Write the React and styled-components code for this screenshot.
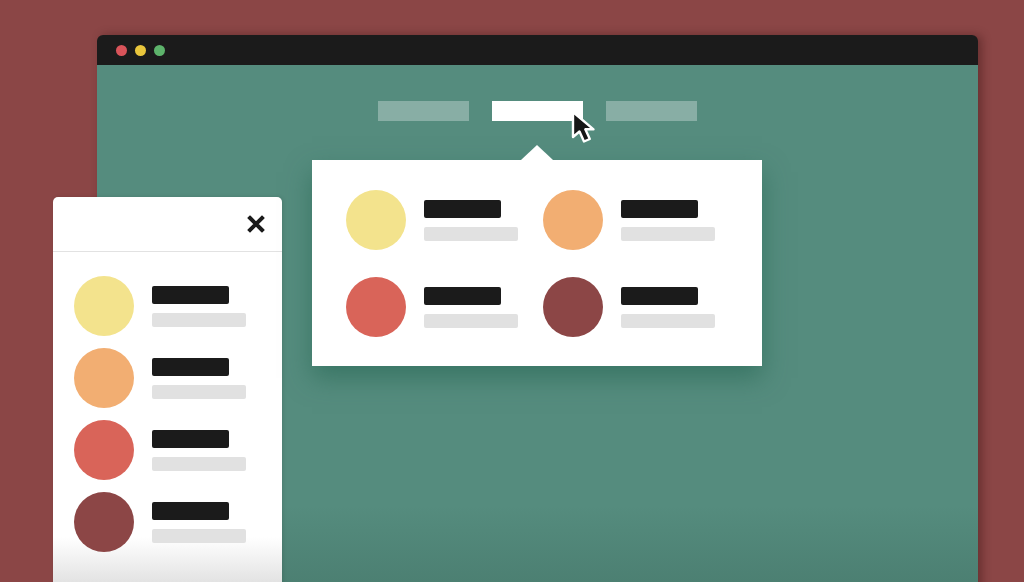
import React from "react";
import styled, { createGlobalStyle } from "styled-components";

const GlobalStyle = createGlobalStyle`
  html, body {
    margin: 0;
    padding: 0;
    background: #8b4646;
    font-family: "Liberation Sans", Arial, sans-serif;
  }
`;

const Stage = styled.div`
  position: relative;
  width: 1024px;
  height: 582px;
  overflow: hidden;
  background: #8b4646;
  padding: 35px 0 0 97px;
  box-sizing: border-box;
`;

const Browser = styled.div`
  width: 881px;
  height: 600px;
  border-radius: 6px 6px 0 0;
  overflow: hidden;
  display: flex;
  flex-direction: column;
  box-shadow: 4px 0 10px rgba(40, 10, 10, 0.35);
`;

const TitleBar = styled.div`
  height: 30px;
  flex: none;
  background: #1b1b1b;
  display: flex;
  align-items: center;
  gap: 8px;
  padding-left: 19px;
`;

const Dot = styled.span`
  width: 11px;
  height: 11px;
  border-radius: 50%;
  background: ${(p) => p.$color};
`;

const Body = styled.div`
  position: relative;
  flex: 1;
  background: #558c7e;
  display: flex;
  flex-direction: column;
  align-items: center;

  &::after {
    content: "";
    position: absolute;
    left: 0;
    right: 0;
    top: 440px;
    height: 90px;
    background: linear-gradient(rgba(0, 0, 0, 0), rgba(20, 50, 40, 0.16));
    pointer-events: none;
  }
`;

const Nav = styled.div`
  display: flex;
  gap: 23px;
  padding-top: 36px;
`;

const NavTab = styled.div`
  position: relative;
  width: 91px;
  height: 20px;
  background: ${(p) => (p.$active ? "#ffffff" : "rgba(255, 255, 255, 0.3)")};
`;

const Cursor = styled.svg`
  position: absolute;
  left: 78px;
  top: 8px;
  width: 28px;
  height: 36px;
  z-index: 3;
`;

const Dropdown = styled.div`
  position: absolute;
  left: 215px;
  top: 95px;
  width: 450px;
  box-sizing: border-box;
  padding: 30px 47px 29px 34px;
  background: #ffffff;
  display: grid;
  grid-template-columns: 172px 172px;
  column-gap: 25px;
  row-gap: 27px;
  z-index: 2;
  box-shadow: 0 12px 24px rgba(30, 95, 75, 0.5);

  &::before {
    content: "";
    position: absolute;
    top: -15px;
    left: 209px;
    border-left: 16px solid transparent;
    border-right: 16px solid transparent;
    border-bottom: 15px solid #ffffff;
  }
`;

const Item = styled.div`
  display: flex;
  align-items: center;
  gap: 18px;
`;

const Avatar = styled.div`
  width: 60px;
  height: 60px;
  flex: none;
  border-radius: 50%;
  background: ${(p) => p.$color};
`;

const Lines = styled.div`
  display: flex;
  flex-direction: column;
  gap: 9px;
`;

const Title = styled.div`
  width: 77px;
  height: 18px;
  border-radius: 2px;
  background: #1b1b1b;
`;

const Sub = styled.div`
  width: 94px;
  height: 14px;
  border-radius: 2px;
  background: #e1e1e1;
`;

const SidePanel = styled.div`
  position: absolute;
  left: 53px;
  top: 197px;
  width: 229px;
  height: 400px;
  background: linear-gradient(
    #ffffff 0,
    #ffffff 340px,
    #e3e3e3 385px
  );
  border-radius: 5px 5px 0 0;
  box-shadow: 1px 0 4px rgba(0, 0, 0, 0.12);
  overflow: hidden;
`;

const PanelHeader = styled.div`
  height: 54px;
  display: flex;
  align-items: center;
  justify-content: flex-end;
  padding-right: 17px;
  border-bottom: 1px solid #e2e2e2;
`;

const CloseButton = styled.svg`
  width: 18px;
  height: 18px;
`;

const PanelList = styled.div`
  display: flex;
  flex-direction: column;
  gap: 12px;
  padding: 24px 0 0 21px;
`;

const colors = ["#f3e38d", "#f2ae72", "#d96459", "#8c4646"];

function Entry({ color }) {
  return (
    <Item>
      <Avatar $color={color} />
      <Lines>
        <Title />
        <Sub />
      </Lines>
    </Item>
  );
}

export default function App() {
  return (
    <>
      <GlobalStyle />
      <Stage>
        <Browser>
          <TitleBar>
            <Dot $color="#d9545a" />
            <Dot $color="#e9c63c" />
            <Dot $color="#5db36b" />
          </TitleBar>
          <Body>
            <Nav>
              <NavTab />
              <NavTab $active>
                <Cursor viewBox="0 0 28 36">
                  <path
                    d="M3 3 L3 28 L9.5 22.5 L14 32.5 L19.8 30 L15.3 20.3 L23.5 20.3 Z"
                    fill="#161616"
                    stroke="#ffffff"
                    strokeWidth="2.4"
                    strokeLinejoin="round"
                  />
                </Cursor>
              </NavTab>
              <NavTab />
            </Nav>
            <Dropdown>
              {colors.map((c) => (
                <Entry key={c} color={c} />
              ))}
            </Dropdown>
          </Body>
        </Browser>
        <SidePanel>
          <PanelHeader>
            <CloseButton viewBox="0 0 18 18">
              <path
                d="M3 3 L15 15 M15 3 L3 15"
                stroke="#1b1b1b"
                strokeWidth="4"
                strokeLinecap="square"
              />
            </CloseButton>
          </PanelHeader>
          <PanelList>
            {colors.map((c) => (
              <Entry key={c} color={c} />
            ))}
          </PanelList>
        </SidePanel>
      </Stage>
    </>
  );
}
